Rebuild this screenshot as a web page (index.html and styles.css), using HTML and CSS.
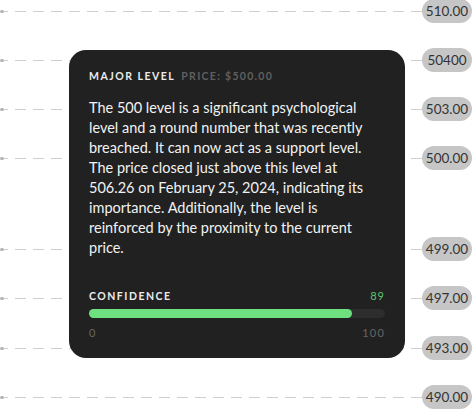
FILE: index.html
```html
<!DOCTYPE html>
<html>
<head>
<meta charset="utf-8">
<link rel="stylesheet" href="styles.css">
</head>
<body>
<div class="chart">
  <div class="level" style="top:-1px"><span class="dot"></span><span class="line"></span><span class="pill">510.00</span></div>
  <div class="level" style="top:48px"><span class="dot"></span><span class="line"></span><span class="pill">50400</span></div>
  <div class="level" style="top:97px"><span class="dot"></span><span class="line"></span><span class="pill">503.00</span></div>
  <div class="level" style="top:146px"><span class="dot"></span><span class="line"></span><span class="pill">500.00</span></div>
  <div class="level" style="top:237px"><span class="dot"></span><span class="line"></span><span class="pill">499.00</span></div>
  <div class="level" style="top:286px"><span class="dot"></span><span class="line"></span><span class="pill">497.00</span></div>
  <div class="level" style="top:336px"><span class="dot"></span><span class="line"></span><span class="pill">493.00</span></div>
  <div class="level" style="top:385px"><span class="dot"></span><span class="line"></span><span class="pill">490.00</span></div>

  <div class="card">
    <div class="card-head">
      <span class="title">MAJOR LEVEL</span>
      <span class="price">PRICE: $500.00</span>
    </div>
    <p class="desc">The 500 level is a significant psychological level and a round number that was recently breached. It can now act as a support level. The price closed just above this level at 506.26 on February 25, 2024, indicating its importance. Additionally, the level is reinforced by the proximity to the current price.</p>
    <div class="conf">
      <div class="conf-head">
        <span class="title">CONFIDENCE</span>
        <span class="conf-val">89</span>
      </div>
      <div class="track"><div class="fill" style="width:89%"></div></div>
      <div class="scale"><span>0</span><span>100</span></div>
    </div>
  </div>
</div>
</body>
</html>
```
FILE: styles.css
```css
* { box-sizing: border-box; }
html, body {
  margin: 0;
  padding: 0;
  background: #ffffff;
  font-family: Lato, "Noto Sans", sans-serif;
}
.chart {
  position: relative;
  width: 474px;
  height: 409px;
  overflow: hidden;
}
.level {
  position: absolute;
  left: 0;
  right: 2px;
  height: 24px;
  display: flex;
  align-items: center;
}
.dot {
  width: 4px;
  height: 3px;
  border-radius: 2px;
  background: #b5b5b5;
  flex: none;
}
.line {
  flex: 1;
  height: 1px;
  background: repeating-linear-gradient(to left, #cfcfcf 0 11px, transparent 11px 18px);
}
.pill {
  flex: none;
  width: 50px;
  height: 24px;
  border-radius: 12px;
  background: #c6c6c6;
  color: #333333;
  font-size: 13.5px;
  line-height: 24px;
  text-align: center;
}
.card {
  position: absolute;
  left: 69px;
  top: 50px;
  width: 336px;
  height: 308px;
  background: #212121;
  border-radius: 17px;
  padding: 19px 20px 18px;
  display: flex;
  flex-direction: column;
}
.card-head {
  display: flex;
  gap: 6px;
  align-items: baseline;
  line-height: 14px;
}
.title {
  font-size: 10.5px;
  font-weight: 700;
  letter-spacing: 1.5px;
  color: #ececec;
}
.price {
  font-size: 10.5px;
  font-weight: 700;
  letter-spacing: 1.3px;
  color: #5f5f5f;
}
.desc {
  margin: 15px 0 0;
  font-size: 14.5px;
  line-height: 20px;
  color: #f2f2f2;
}
.conf {
  margin-top: auto;
}
.conf-head {
  display: flex;
  justify-content: space-between;
  align-items: baseline;
  line-height: 14px;
}
.conf-val {
  font-size: 11px;
  letter-spacing: 1px;
  color: #5fc470;
}
.track {
  margin-top: 6px;
  height: 9px;
  border-radius: 5px;
  background: #2d2d2d;
}
.fill {
  height: 100%;
  border-radius: 5px;
  background: #6ee07f;
}
.scale {
  margin-top: 8px;
  display: flex;
  justify-content: space-between;
  font-size: 11px;
  letter-spacing: 1.2px;
  line-height: 14px;
  color: #666666;
}
```
